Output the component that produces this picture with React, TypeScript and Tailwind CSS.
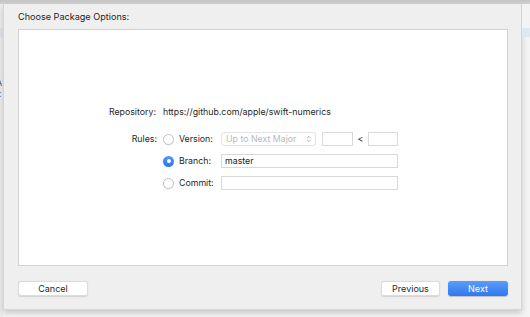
import { ChevronsUpDown } from 'lucide-react';

const font = { fontFamily: 'Inter, "Liberation Sans", sans-serif' };

function Radio({ checked }: { checked?: boolean }) {
  if (checked) {
    return (
      <span className="w-[11px] h-[11px] rounded-full bg-gradient-to-b from-[#4f95f9] to-[#2c77f2] flex items-center justify-center shrink-0">
        <span className="w-[4px] h-[4px] rounded-full bg-white" />
      </span>
    );
  }
  return (
    <span className="w-[11px] h-[11px] rounded-full bg-white border border-[#c2c2c2] shadow-[0_0.5px_1px_rgba(0,0,0,0.08)] shrink-0" />
  );
}

function Field({ className, children }: { className?: string; children?: React.ReactNode }) {
  return (
    <div className={`h-[14px] bg-white border border-[#d9d9d9] flex items-center px-[3px] text-[#1a1a1a] ${className ?? ''}`}>
      {children}
    </div>
  );
}

function Button({ label, primary, width }: { label: string; primary?: boolean; width: string }) {
  return (
    <button
      className={`h-[15px] rounded-[3px] text-[9px] leading-none flex items-center justify-center ${width} ${
        primary
          ? 'bg-gradient-to-b from-[#5a9cf8] to-[#2f78f1] text-white shadow-[0_0.5px_1px_rgba(0,0,0,0.2)]'
          : 'bg-white text-[#1f1f1f] border border-[#dcdcdc] shadow-[0_0.5px_1px_rgba(0,0,0,0.12)]'
      }`}
    >
      {label}
    </button>
  );
}

export default function App() {
  return (
    <div className="w-[530px] h-[317px] overflow-hidden bg-[#f4f4f4] flex flex-col" style={font}>
      {/* window title bar behind the sheet */}
      <div className="h-[4px] bg-gradient-to-b from-[#c4c4c4] to-[#d2d2d2] shrink-0" />

      <div className="flex flex-1">
        {/* left edge of the window behind */}
        <div className="w-[3px] shrink-0 bg-[#ececec] flex flex-col overflow-hidden">
          <div className="h-[24px] bg-[#ededed]" />
          <div className="h-[9px] bg-[#dfe5ec]" />
          <div className="mt-[40px] text-[9px] leading-[11px] text-[#555] -ml-[4px]">A</div>
          <div className="text-[9px] leading-[11px] text-[#555] -ml-[2px]">t</div>
        </div>

        {/* sheet */}
        <div className="w-[519px] h-[306px] shrink-0 bg-[#efefef] border-x border-b border-[#d6d6d6] shadow-[0_3px_6px_rgba(0,0,0,0.18)] flex flex-col pl-[14px] pr-[13px]">
          <div className="h-[25px] flex items-center text-[9.1px] text-[#1f1f1f]">Choose Package Options:</div>

          <div className="h-[237px] bg-white border border-[#d2d2d2] pt-[71px] text-[8.8px] text-[#1f1f1f] flex flex-col">
            <div className="h-[22px] flex items-center">
              <div className="w-[137px] text-right">Repository:</div>
              <div className="ml-[7px]">https://github.com/apple/swift-numerics</div>
            </div>

            <div className="mt-[5px] flex">
              <div className="w-[138px] h-[22px] flex items-center justify-end">Rules:</div>
              <div className="ml-[6px] flex flex-col">
                <div className="h-[22px] flex items-center">
                  <Radio />
                  <span className="w-[47px] pl-[5px]">Version:</span>
                  <div className="w-[95px] h-[14px] rounded-[3px] bg-white border border-[#e3e3e3] flex items-center justify-between pl-[4px] pr-[2px] text-[#b9b9b9]">
                    <span>Up to Next Major</span>
                    <ChevronsUpDown size={8} strokeWidth={2} className="text-[#8f8f8f]" />
                  </div>
                  <Field className="w-[31px] ml-[6px]" />
                  <span className="w-[15px] text-center">&lt;</span>
                  <Field className="w-[30px]" />
                </div>
                <div className="h-[22px] flex items-center">
                  <Radio checked />
                  <span className="w-[47px] pl-[5px]">Branch:</span>
                  <Field className="w-[177px]">master</Field>
                </div>
                <div className="h-[22px] flex items-center">
                  <Radio />
                  <span className="w-[47px] pl-[5px]">Commit:</span>
                  <Field className="w-[177px]" />
                </div>
              </div>
            </div>
          </div>

          <div className="flex items-center mt-[15px]">
            <Button label="Cancel" width="w-[70px]" />
            <div className="flex-1" />
            <Button label="Previous" width="w-[59px]" />
            <div className="w-[8px]" />
            <Button label="Next" primary width="w-[60px]" />
          </div>
        </div>

        {/* right edge of the window behind */}
        <div className="flex-1 flex flex-col">
          <div className="h-[24px] bg-[#f3f3f3]" />
          <div className="h-[9px] bg-[#dfe7f1]" />
        </div>
      </div>
    </div>
  );
}
